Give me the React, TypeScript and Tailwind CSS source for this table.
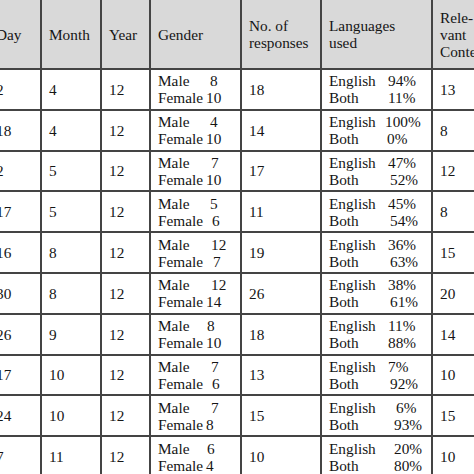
import React from "react";

type Row = {
  day: string;
  month: string;
  male: string;
  maleW: string;
  female: string;
  femaleW: string;
  responses: string;
  eng: string;
  engW: string;
  both: string;
  bothW: string;
  relevant: string;
};

const rows: Row[] = [
  { day: "2", month: "4", male: "8", maleW: "w-[52px]", female: "10", femaleW: "w-[48px]", responses: "18", eng: "94%", engW: "w-[59px]", both: "11%", bothW: "w-[59px]", relevant: "13" },
  { day: "18", month: "4", male: "4", maleW: "w-[52px]", female: "10", femaleW: "w-[48px]", responses: "14", eng: "100%", engW: "w-[56px]", both: "0%", bothW: "w-[58px]", relevant: "8" },
  { day: "2", month: "5", male: "7", maleW: "w-[53px]", female: "10", femaleW: "w-[48px]", responses: "17", eng: "47%", engW: "w-[59px]", both: "52%", bothW: "w-[61px]", relevant: "12" },
  { day: "17", month: "5", male: "5", maleW: "w-[52px]", female: "6", femaleW: "w-[54px]", responses: "11", eng: "45%", engW: "w-[59px]", both: "54%", bothW: "w-[61px]", relevant: "8" },
  { day: "16", month: "8", male: "12", maleW: "w-[53px]", female: "7", femaleW: "w-[55px]", responses: "19", eng: "36%", engW: "w-[59px]", both: "63%", bothW: "w-[61px]", relevant: "15" },
  { day: "30", month: "8", male: "12", maleW: "w-[53px]", female: "14", femaleW: "w-[48px]", responses: "26", eng: "38%", engW: "w-[59px]", both: "61%", bothW: "w-[61px]", relevant: "20" },
  { day: "26", month: "9", male: "8", maleW: "w-[49px]", female: "10", femaleW: "w-[48px]", responses: "18", eng: "11%", engW: "w-[59px]", both: "88%", bothW: "w-[59px]", relevant: "14" },
  { day: "17", month: "10", male: "7", maleW: "w-[53px]", female: "6", femaleW: "w-[54px]", responses: "13", eng: "7%", engW: "w-[59px]", both: "92%", bothW: "w-[61px]", relevant: "10" },
  { day: "24", month: "10", male: "7", maleW: "w-[53px]", female: "8", femaleW: "w-[48px]", responses: "15", eng: "6%", engW: "w-[67px]", both: "93%", bothW: "w-[65px]", relevant: "15" },
  { day: "7", month: "11", male: "6", maleW: "w-[49px]", female: "4", femaleW: "w-[48px]", responses: "10", eng: "20%", engW: "w-[65px]", both: "80%", bothW: "w-[65px]", relevant: "10" },
];

const cell = "border-2 border-[#444] px-[7px] align-middle";

function App() {
  return (
    <div className="w-[474px] h-[474px] overflow-hidden bg-white font-['Liberation_Serif',serif] text-[15.3px] leading-[17px] text-[#151515]">
      <table className="table-fixed border-collapse -ml-[13px] -mt-[2px] w-[503px]">
        <colgroup>
          <col className="w-[53px]" />
          <col className="w-[60px]" />
          <col className="w-[49px]" />
          <col className="w-[91px]" />
          <col className="w-[80px]" />
          <col className="w-[111px]" />
          <col className="w-[59px]" />
        </colgroup>
        <thead>
          <tr className="h-[70px] bg-[#d9d9d9] text-left">
            <th className={`${cell} font-normal`}>Day</th>
            <th className={`${cell} font-normal`}>Month</th>
            <th className={`${cell} font-normal`}>Year</th>
            <th className={`${cell} font-normal`}>Gender</th>
            <th className={`${cell} font-normal`}>
              No. of
              <br />
              responses
            </th>
            <th className={`${cell} font-normal`}>
              Languages
              <br />
              used
            </th>
            <th className={`${cell} font-normal whitespace-nowrap`}>
              Rele-
              <br />
              vant
              <br />
              Content
            </th>
          </tr>
        </thead>
        <tbody>
          {rows.map((r, i) => (
            <tr key={i} className="h-[40.8px]">
              <td className={cell}>{r.day}</td>
              <td className={cell}>{r.month}</td>
              <td className={cell}>12</td>
              <td className={cell}>
                <div className="flex">
                  <span className={`${r.maleW} shrink-0`}>Male</span>
                  <span>{r.male}</span>
                </div>
                <div className="flex">
                  <span className={`${r.femaleW} shrink-0`}>Female</span>
                  <span>{r.female}</span>
                </div>
              </td>
              <td className={cell}>{r.responses}</td>
              <td className={cell}>
                <div className="flex">
                  <span className={`${r.engW} shrink-0`}>English</span>
                  <span>{r.eng}</span>
                </div>
                <div className="flex">
                  <span className={`${r.bothW} shrink-0`}>Both</span>
                  <span>{r.both}</span>
                </div>
              </td>
              <td className={cell}>{r.relevant}</td>
            </tr>
          ))}
        </tbody>
      </table>
    </div>
  );
}

export default App;
